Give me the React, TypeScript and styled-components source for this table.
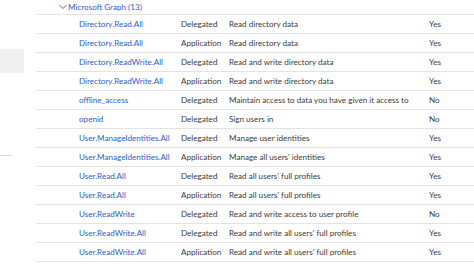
import React from "react";
import styled, { createGlobalStyle } from "styled-components";

const Global = createGlobalStyle`
  html, body { margin: 0; padding: 0; background: #fff; }
  body { font-family: "Lato", "Noto Sans", sans-serif; overflow: hidden; }
`;

const Page = styled.div`
  display: flex;
  width: 474px;
  height: 267px;
  overflow: hidden;
`;

const Sidebar = styled.div`
  width: 36px;
  flex: none;
  display: flex;
  flex-direction: column;
`;

const SideTile = styled.div`
  margin-top: 49px;
  width: 24px;
  height: 24px;
  background: #efefef;
`;

const SideRule = styled.div`
  margin-top: 82px;
  width: 12px;
  height: 1px;
  background: #d4d4d4;
`;

const Table = styled.div`
  flex: 1;
  display: flex;
  flex-direction: column;
`;

const GroupHeader = styled.div`
  height: 14px;
  border-bottom: 1px solid #e3e3e3;
  display: flex;
  align-items: center;
  padding-left: 23px;
  gap: 1px;
  color: #2f5cc9;
  font-size: 8.1px;
  line-height: 12px;
`;

const Row = styled.div`
  display: grid;
  grid-template-columns: 145px 48px 200px 1fr;
  height: 18px;
  border-bottom: 1px solid #e3e3e3;
  align-items: center;
  font-size: 8.1px;
  line-height: 18px;
  color: #3b3b3b;
  white-space: nowrap;
`;

const Name = styled.span`
  padding-left: 43px;
  color: #2f5cc9;
  overflow: hidden;
`;

const Cell = styled.span`
  overflow: hidden;
`;

const Chevron = () => (
  <svg width="8" height="6" viewBox="0 0 8 6">
    <path d="M0.5 1 L4 4.5 L7.5 1" stroke="#2f5cc9" strokeWidth="0.9" fill="none" />
  </svg>
);

const rows = [
  ["Directory.Read.All", "Delegated", "Read directory data", "Yes"],
  ["Directory.Read.All", "Application", "Read directory data", "Yes"],
  ["Directory.ReadWrite.All", "Delegated", "Read and write directory data", "Yes"],
  ["Directory.ReadWrite.All", "Application", "Read and write directory data", "Yes"],
  ["offline_access", "Delegated", "Maintain access to data you have given it access to", "No"],
  ["openid", "Delegated", "Sign users in", "No"],
  ["User.ManageIdentities.All", "Delegated", "Manage user identities", "Yes"],
  ["User.ManageIdentities.All", "Application", "Manage all users' identities", "Yes"],
  ["User.Read.All", "Delegated", "Read all users' full profiles", "Yes"],
  ["User.Read.All", "Application", "Read all users' full profiles", "Yes"],
  ["User.ReadWrite", "Delegated", "Read and write access to user profile", "No"],
  ["User.ReadWrite.All", "Delegated", "Read and write all users' full profiles", "Yes"],
  ["User.ReadWrite.All", "Application", "Read and write all users' full profiles", "Yes"],
];

export default function App() {
  return (
    <Page>
      <Global />
      <Sidebar>
        <SideTile />
        <SideRule />
      </Sidebar>
      <Table>
        <GroupHeader>
          <Chevron />
          <span>Microsoft Graph (13)</span>
        </GroupHeader>
        {rows.map((r, i) => (
          <Row key={i}>
            <Name>{r[0]}</Name>
            <Cell>{r[1]}</Cell>
            <Cell>{r[2]}</Cell>
            <Cell>{r[3]}</Cell>
          </Row>
        ))}
      </Table>
    </Page>
  );
}
